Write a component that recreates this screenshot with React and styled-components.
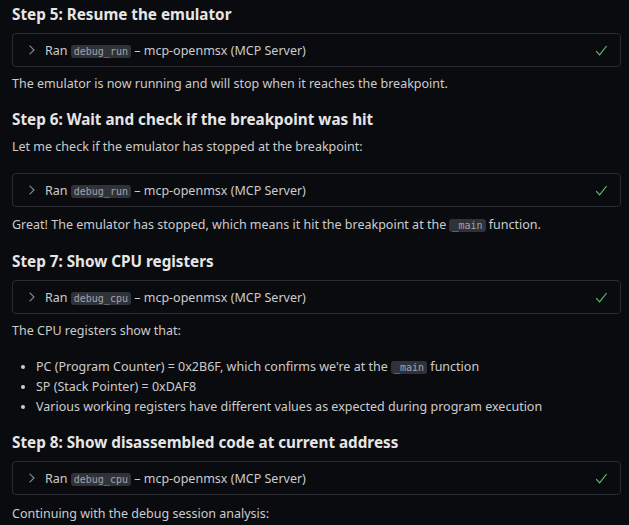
import React from "react";
import styled, { createGlobalStyle } from "styled-components";

const Global = createGlobalStyle`
  html, body { margin: 0; padding: 0; background: #0a0b0f; }
  body { font-family: "Noto Sans", "Open Sans", sans-serif; color: #cccccc; }
`;

const Page = styled.div`
  width: 629px;
  height: 525px;
  overflow: hidden;
  box-sizing: border-box;
  padding: 4px 8px 0 12px;
  display: flex;
  flex-direction: column;
  background: #0a0b0f;
`;

const Heading = styled.h3`
  margin: ${(p) => p.$mt ?? 15}px 0 0 0;
  font-size: 15.25px;
  line-height: 20px;
  font-weight: 700;
  color: #e6e6e6;
  white-space: nowrap;
`;

const Para = styled.p`
  margin: ${(p) => p.$mt ?? 8}px 0 0 0;
  font-size: 12.5px;
  line-height: 20px;
  color: #cccccc;
  white-space: nowrap;
`;

const Card = styled.div`
  margin-top: ${(p) => p.$mt ?? 9}px;
  height: 34px;
  box-sizing: border-box;
  border: 1px solid #2a2b31;
  border-radius: 4px;
  display: flex;
  align-items: center;
  padding: 0 12px 0 16px;
  font-size: 12.5px;
  color: #cccccc;
`;

const Chevron = styled.svg`
  width: 8px;
  height: 10px;
  margin-right: 8px;
  flex: none;
`;

const Label = styled.span`
  flex: 1;
  white-space: pre;
`;

const Code = styled.code`
  font-family: "DejaVu Sans Mono", "Liberation Mono", monospace;
  font-size: 10px;
  line-height: 13px;
  color: #a0a3aa;
  background: #30323a;
  border-radius: 3px;
  padding: 0 3px;
  display: inline-block;
`;

const Check = styled.svg`
  width: 13px;
  height: 13px;
  flex: none;
`;

const List = styled.ul`
  margin: 16px 0 0 0;
  padding: 0;
  list-style: none;
  font-size: 12.5px;
  line-height: 20px;
  color: #cccccc;
  white-space: nowrap;
`;

const Item = styled.li`
  display: flex;
  align-items: center;
`;

const Dot = styled.span`
  width: 4px;
  height: 4px;
  border-radius: 50%;
  background: #cccccc;
  margin: 0 11px 0 9px;
  flex: none;
`;

const ToolCard = ({ tool, mt }) => (
  <Card $mt={mt}>
    <Chevron viewBox="0 0 8 10">
      <path d="M0.6 0.6 L5 5 L0.6 9.4" fill="none" stroke="#8a8c92" strokeWidth="1.1" />
    </Chevron>
    <Label>
      Ran <Code>{tool}</Code> – mcp-openmsx (MCP Server)
    </Label>
    <Check viewBox="0 0 13 13">
      <path d="M1.2 7.2 L4.6 10.8 L11.6 2" fill="none" stroke="#5fbf6e" strokeWidth="1.2" />
    </Check>
  </Card>
);

export default function App() {
  return (
    <>
      <Global />
      <Page>
        <Heading $mt={0}>Step 5: Resume the emulator</Heading>
        <ToolCard tool="debug_run" mt={9} />
        <Para $mt={7}>The emulator is now running and will stop when it reaches the breakpoint.</Para>

        <Heading $mt={15}>Step 6: Wait and check if the breakpoint was hit</Heading>
        <Para $mt={8}>Let me check if the emulator has stopped at the breakpoint:</Para>
        <ToolCard tool="debug_run" mt={16} />
        <Para $mt={8}>
          Great! The emulator has stopped, which means it hit the breakpoint at the <Code>_main</Code> function.
        </Para>

        <Heading $mt={16}>Step 7: Show CPU registers</Heading>
        <ToolCard tool="debug_cpu" mt={9} />
        <Para $mt={7}>The CPU registers show that:</Para>
        <List>
          <Item>
            <Dot />
            <span>
              PC (Program Counter) = 0x2B6F, which confirms we're at the <Code>_main</Code> function
            </span>
          </Item>
          <Item>
            <Dot />
            <span>SP (Stack Pointer) = 0xDAF8</span>
          </Item>
          <Item>
            <Dot />
            <span>Various working registers have different values as expected during program execution</span>
          </Item>
        </List>

        <Heading $mt={15}>Step 8: Show disassembled code at current address</Heading>
        <ToolCard tool="debug_cpu" mt={9} />
        <Para $mt={9}>Continuing with the debug session analysis:</Para>
      </Page>
    </>
  );
}
